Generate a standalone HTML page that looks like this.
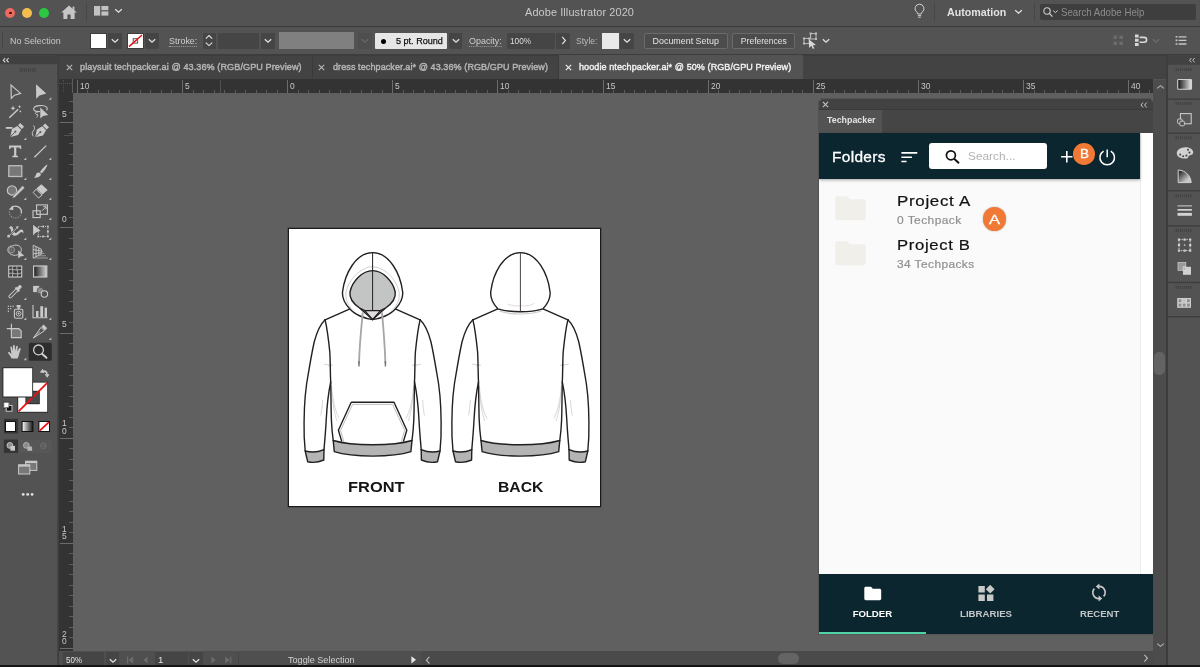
<!DOCTYPE html>
<html>
<head>
<meta charset="utf-8">
<title>Adobe Illustrator 2020</title>
<style>
*{margin:0;padding:0;box-sizing:border-box;}
html,body{width:1200px;height:667px;overflow:hidden;background:#535353;}
body{font-family:"Liberation Sans",sans-serif;font-size:10px;color:#d6d6d6;position:relative;}
.abs{position:absolute;}
#titlebar{left:0;top:0;width:1200px;height:26px;background:#535353;}
#titleline{left:0;top:26px;width:1200px;height:1px;background:#3a3a3a;}
#ctrlbar{left:0;top:27px;width:1200px;height:27px;background:#535353;}
#tabstrip{left:0;top:54px;width:1200px;height:25px;background:#434343;}
#canvas{left:73px;top:93px;width:1080px;height:558px;background:#606060;}
.t{position:absolute;white-space:nowrap;line-height:1;transform-origin:0 50%;}

.tl{position:absolute;top:7.7px;width:10.4px;height:10.4px;border-radius:50%;}
.vsep{position:absolute;width:1px;background:#474747;}

.cb{position:absolute;top:33px;height:15.5px;}
.dd{position:absolute;top:33px;height:15.5px;width:14px;background:#454545;border-radius:1px;}
.dd svg,.chev{position:absolute;left:3px;top:5px;}
.inp{position:absolute;top:33px;height:15.5px;background:#454545;border-radius:1px;}
.lbl{position:absolute;top:35.8px;font-size:9.6px;transform-origin:0 50%;color:#cfcfcf;white-space:nowrap;line-height:1;}
.dot{border-bottom:1px dotted #a0a0a0;padding-bottom:.4px;}
.btn{position:absolute;top:32.5px;height:16.5px;border:1px solid #6a6a6a;border-radius:2px;background:#4c4c4c;color:#e4e4e4;font-size:9.6px;line-height:14.5px;text-align:center;white-space:nowrap;}
.btn span{display:inline-block;}

.tab{position:absolute;top:62.2px;font-size:9.6px;color:#b4b4b4;white-space:nowrap;line-height:1;transform-origin:0 50%;-webkit-text-stroke:0.45px #b4b4b4;letter-spacing:0.1px;}
.tabx{position:absolute;top:63.5px;}
.rl{position:absolute;font-size:9.6px;color:#c8c8c8;line-height:1;white-space:nowrap;transform-origin:0 50%;transform:scaleX(.88);}

.pt{position:absolute;white-space:nowrap;line-height:1;transform-origin:0 50%;}
/*SECTION-CSS*/
</style>
</head>
<body>
<div id="root" style="position:absolute;left:0;top:0;width:1200px;height:667px;will-change:transform;">
<div id="titlebar" class="abs"></div>
<div id="titleline" class="abs"></div>
<div id="ctrlbar" class="abs"></div>
<div id="tabstrip" class="abs"></div>
<div id="canvas" class="abs"></div>
<!--TITLEBAR-->
<div class="tl" style="left:5.1px;background:#ec6a5e;"></div>
<div class="abs" style="left:8.9px;top:11.5px;width:2.8px;height:2.8px;border-radius:50%;background:#3a0d0a;"></div>
<div class="tl" style="left:21.6px;background:#f4be4f;"></div>
<div class="tl" style="left:38.5px;background:#2bc840;"></div>
<svg class="abs" style="left:60px;top:5px" width="18" height="15" viewBox="0 0 18 15"><path d="M9 0.6 L16.8 7.6 H14.6 V14 H10.6 V9.6 H7.4 V14 H3.4 V7.6 H1.2 Z" fill="#c6c6c6"/><rect x="12.6" y="1.6" width="1.8" height="3.4" fill="#c6c6c6"/></svg>
<div class="vsep" style="left:86px;top:3px;height:18px;"></div>
<svg class="abs" style="left:94px;top:6px" width="15" height="10" viewBox="0 0 15 10"><rect x="0" y="0" width="6.2" height="9.6" fill="#c2c2c2"/><rect x="7.4" y="0" width="7" height="4.2" fill="#c2c2c2"/><rect x="7.4" y="5.4" width="7" height="4.2" fill="#c2c2c2"/></svg>
<svg class="abs" style="left:114px;top:8px" width="9" height="6" viewBox="0 0 9 6"><path d="M1.2 1.2 L4.5 4.2 L7.8 1.2" stroke="#e6e6e6" stroke-width="1.2" fill="none"/></svg>
<div class="t" id="apptitle" style="transform:scaleX(0.927);left:525px;top:6.5px;font-size:11.8px;color:#c9c9c9;letter-spacing:0.1px;">Adobe Illustrator 2020</div>
<svg class="abs" style="left:913px;top:3px" width="13" height="18" viewBox="0 0 13 18"><path d="M6.5 1.2 a4.4 4.4 0 0 1 2.6 8 c-.6.5-.8 1-.8 1.8 h-3.6 c0-.8-.2-1.3-.8-1.8 a4.4 4.4 0 0 1 2.6-8z" stroke="#cfcfcf" stroke-width="1" fill="none"/><path d="M4.9 12.6h3.2M5.2 14.2h2.6" stroke="#cfcfcf" stroke-width="1"/></svg>
<div class="vsep" style="left:934px;top:3px;height:18px;"></div>
<div class="t" id="automation" style="transform:scaleX(0.970);left:946.5px;top:7px;font-size:11px;font-weight:bold;color:#e2e2e2;">Automation</div>
<svg class="abs" style="left:1014px;top:9px" width="9" height="6" viewBox="0 0 9 6"><path d="M1.2 1.2 L4.5 4.2 L7.8 1.2" stroke="#e6e6e6" stroke-width="1.2" fill="none"/></svg>
<div class="vsep" style="left:1034px;top:3px;height:18px;"></div>
<div class="abs" style="left:1040px;top:4px;width:156px;height:16px;background:#3e3e3e;border-radius:2px;"></div>
<svg class="abs" style="left:1042px;top:6px" width="18" height="13" viewBox="0 0 18 13"><circle cx="5" cy="5" r="3.2" stroke="#d0d0d0" stroke-width="1.1" fill="none"/><path d="M7.4 7.4 L10.4 10.6" stroke="#d0d0d0" stroke-width="1.3"/><path d="M11.2 4.6 L13.4 6.6 L15.6 4.6" stroke="#d0d0d0" stroke-width="1" fill="none"/></svg>
<div class="t" id="searchhelp" style="transform:scaleX(0.949);left:1061px;top:7.5px;font-size:10.2px;color:#8c8c8c;">Search Adobe Help</div>

<!--CTRLBAR-->
<div class="abs" style="left:2px;top:32px;width:1px;height:17px;background:#464646;"></div>
<div class="lbl" id="nosel" style="transform:scaleX(0.932);left:10px;color:#c8c8c8;">No Selection</div>
<div class="cb" style="left:90px;width:16.5px;background:#fff;border:1px solid #3c3c3c;"></div>
<div class="dd" style="left:107.5px;"><svg width="8" height="6" viewBox="0 0 8 6"><path d="M0.8 1.2 L4 4.2 L7.2 1.2" stroke="#e6e6e6" stroke-width="1.2" fill="none"/></svg></div>
<div class="cb" style="left:127px;width:16.5px;background:#fff;border:1px solid #3c3c3c;overflow:hidden;"><svg width="15" height="14" viewBox="0 0 15 14" style="position:absolute;left:0;top:0"><rect x="5.2" y="4.7" width="4.4" height="4.4" fill="none" stroke="#555" stroke-width="1"/><path d="M1 12.6 L14 1" stroke="#e8111b" stroke-width="1.5"/></svg></div>
<div class="dd" style="left:144.5px;"><svg width="8" height="6" viewBox="0 0 8 6"><path d="M0.8 1.2 L4 4.2 L7.2 1.2" stroke="#e6e6e6" stroke-width="1.2" fill="none"/></svg></div>
<div class="lbl" id="strokelbl" style="transform:scaleX(0.931);left:168.5px;"><span class="dot">Stroke:</span></div>
<div class="inp" style="left:202.5px;width:13.5px;"><svg width="8" height="13" viewBox="0 0 8 13" style="position:absolute;left:2.8px;top:1.2px"><path d="M0.8 4.6 L4 1.6 L7.2 4.6 M0.8 8.6 L4 11.6 L7.2 8.6" stroke="#e0e0e0" stroke-width="1.1" fill="none"/></svg></div>
<div class="inp" style="left:218px;width:41px;"></div>
<div class="dd" style="left:260.5px;"><svg width="8" height="6" viewBox="0 0 8 6"><path d="M0.8 1.2 L4 4.2 L7.2 1.2" stroke="#e6e6e6" stroke-width="1.2" fill="none"/></svg></div>
<div class="abs" style="left:279px;top:32px;width:75px;height:17px;background:#808080;"></div>
<div class="dd" style="left:358px;background:#4e4e4e;"><svg width="8" height="6" viewBox="0 0 8 6"><path d="M0.8 1.2 L4 4.2 L7.2 1.2" stroke="#6a6a6a" stroke-width="1.2" fill="none"/></svg></div>
<div class="cb" style="left:375px;width:72px;background:#e6e6e6;border-radius:1px;"></div>
<div class="abs" style="left:381px;top:38.5px;width:5px;height:5px;border-radius:50%;background:#000;"></div>
<div class="lbl" id="ptround" style="-webkit-text-stroke:.25px #111;transform:scaleX(0.945);left:395.5px;color:#111;">5 pt. Round</div>
<div class="dd" style="left:449px;width:13px;"><svg width="8" height="6" viewBox="0 0 8 6"><path d="M0.8 1.2 L4 4.2 L7.2 1.2" stroke="#e6e6e6" stroke-width="1.2" fill="none"/></svg></div>
<div class="lbl" id="opac" style="transform:scaleX(0.932);left:468.5px;"><span class="dot">Opacity:</span></div>
<div class="inp" style="left:506.5px;width:48px;"></div>
<div class="lbl" id="pct" style="transform:scaleX(0.864);left:510px;color:#dcdcdc;">100%</div>
<div class="inp" style="left:556px;width:14px;"><svg width="6" height="9" viewBox="0 0 6 9" style="position:absolute;left:4.5px;top:3.2px"><path d="M1.2 0.8 L4.4 4.5 L1.2 8.2" stroke="#e0e0e0" stroke-width="1.2" fill="none"/></svg></div>
<div class="lbl" id="stylelbl" style="transform:scaleX(0.896);left:575.5px;color:#b9b9b9;">Style:</div>
<div class="cb" style="left:602px;width:16.5px;background:#e9e9e9;"></div>
<div class="dd" style="left:620px;width:13.5px;"><svg width="8" height="6" viewBox="0 0 8 6"><path d="M0.8 1.2 L4 4.2 L7.2 1.2" stroke="#e6e6e6" stroke-width="1.2" fill="none"/></svg></div>
<div class="btn" id="docsetup" style="left:644px;width:84px;"><span id="docsetup_s" style="transform:scaleX(0.928);">Document Setup</span></div>
<div class="btn" id="prefs" style="left:732px;width:63px;"><span id="prefs_s" style="transform:scaleX(0.889);">Preferences</span></div>
<svg class="abs" style="left:802px;top:32px" width="18" height="18" viewBox="0 0 18 18"><rect x="2" y="6.4" width="5.2" height="5.2" fill="none" stroke="#bdbdbd" stroke-width="1"/><rect x="8.6" y="1.6" width="5.4" height="5.4" fill="none" stroke="#bdbdbd" stroke-width="1"/><path d="M1 5.4h2v2h-2zM6.2 5.4h2v2h-2zM1 10.6h2v2h-2zM7.6 .6h2v2h-2zM13 .6h2v2h-2zM13 6h2v2h-2z" fill="#bdbdbd"/><path d="M7 7.4 L7 16 L9.3 13.8 L10.9 17 L12.3 16.3 L10.8 13.2 L14 13 Z" fill="#d8d8d8"/></svg>
<svg class="abs" style="left:822px;top:38px" width="8" height="6" viewBox="0 0 8 6"><path d="M0.8 1.2 L4 4.2 L7.2 1.2" stroke="#e6e6e6" stroke-width="1.2" fill="none"/></svg>
<svg class="abs" style="left:1113px;top:35px" width="11" height="11" viewBox="0 0 11 11"><path d="M.5 .5h3.6v3.6h-3.6zM6.4 .5h3.6v3.6h-3.6zM.5 6.4h3.6v3.6h-3.6zM6.4 6.4h3.6v3.6h-3.6z" fill="#6b6b6b"/></svg>
<svg class="abs" style="left:1134px;top:34px" width="14" height="13" viewBox="0 0 14 13"><path d="M1 .6h3.6v3h-3.6zM1 4.8h3.6v3h-3.6zM1 9h3.6v3h-3.6z" fill="#d8d8d8"/><path d="M5.6 3.4h4.6a2.4 2.4 0 0 1 0 4.8H5.6" stroke="#d8d8d8" stroke-width="1.6" fill="none"/></svg>
<svg class="abs" style="left:1152px;top:38px" width="8" height="6" viewBox="0 0 8 6"><path d="M0.8 1.2 L4 4.2 L7.2 1.2" stroke="#6c6c6c" stroke-width="1.2" fill="none"/></svg>
<svg class="abs" style="left:1175px;top:35px" width="12" height="11" viewBox="0 0 12 11"><path d="M.6 1h1.8v1.6H.6zM.6 4.6h1.8v1.6H.6zM.6 8.2h1.8v1.6H.6z" fill="#c8c8c8"/><path d="M3.6 1.8h7.8M3.6 5.4h7.8M3.6 9h7.8" stroke="#c8c8c8" stroke-width="1.3"/></svg>

<!--TABS-->
<div class="abs" style="left:0;top:54px;width:1200px;height:1.5px;background:#3d3d3d;"></div>
<div class="abs" style="left:559px;top:55px;width:244px;height:24px;background:#535353;"></div>
<div class="abs" style="left:312px;top:57px;width:1px;height:21px;background:#3a3a3a;"></div>
<div class="abs" style="left:558px;top:57px;width:1px;height:21px;background:#3a3a3a;"></div>
<svg class="tabx" style="left:65.5px" width="7" height="7" viewBox="0 0 7 7"><path d="M0.8 0.8 L6.2 6.2 M6.2 0.8 L0.8 6.2" stroke="#b8b8b8" stroke-width="1.1"/></svg>
<div class="tab" id="tab1" style="transform:scaleX(0.946);left:80px;">playsuit techpacker.ai @ 43.36% (RGB/GPU Preview)</div>
<svg class="tabx" style="left:318.0px" width="7" height="7" viewBox="0 0 7 7"><path d="M0.8 0.8 L6.2 6.2 M6.2 0.8 L0.8 6.2" stroke="#b8b8b8" stroke-width="1.1"/></svg>
<div class="tab" id="tab2" style="transform:scaleX(0.940);left:332.7px;">dress techpacker.ai* @ 43.36% (RGB/GPU Preview)</div>
<svg class="tabx" style="left:564.5px" width="7" height="7" viewBox="0 0 7 7"><path d="M0.8 0.8 L6.2 6.2 M6.2 0.8 L0.8 6.2" stroke="#f2f2f2" stroke-width="1.1"/></svg>
<div class="tab" id="tab3" style="transform:scaleX(0.939);left:579.2px;color:#f2f2f2;-webkit-text-stroke:0.4px #f2f2f2;">hoodie ntechpacker.ai* @ 50% (RGB/GPU Preview)</div>

<!--RULERS-->
<div class="abs" style="left:57.3px;top:54px;width:1.4px;height:613px;background:#3e3e3e;"></div>
<div class="abs" id="rtop" style="left:58.7px;top:79px;width:1094.0px;height:14px;background:#333;overflow:hidden;">
<div class="abs" style="left:13.6px;top:0;width:1px;height:14px;background:#5c5c5c;"></div>
<div class="abs" style="left:4px;top:1px;width:0;height:12px;border-left:1px dotted #4e4e4e;"></div><div class="abs" style="left:0;top:4px;width:13px;height:0;border-top:1px dotted #565656;"></div>
<div class="abs" style="left:18.2px;top:1px;width:1px;height:13px;background:#6c6c6c;"></div>
<div class="rl" style="left:21.2px;top:1.9px;">10</div>
<div class="abs" style="left:28.7px;top:10.5px;width:1px;height:3.5px;background:#5c5c5c;"></div>
<div class="abs" style="left:39.2px;top:10.5px;width:1px;height:3.5px;background:#5c5c5c;"></div>
<div class="abs" style="left:49.7px;top:10.5px;width:1px;height:3.5px;background:#5c5c5c;"></div>
<div class="abs" style="left:60.3px;top:10.5px;width:1px;height:3.5px;background:#5c5c5c;"></div>
<div class="abs" style="left:70.8px;top:10.5px;width:1px;height:3.5px;background:#5c5c5c;"></div>
<div class="abs" style="left:81.3px;top:10.5px;width:1px;height:3.5px;background:#5c5c5c;"></div>
<div class="abs" style="left:91.8px;top:10.5px;width:1px;height:3.5px;background:#5c5c5c;"></div>
<div class="abs" style="left:102.3px;top:10.5px;width:1px;height:3.5px;background:#5c5c5c;"></div>
<div class="abs" style="left:112.8px;top:10.5px;width:1px;height:3.5px;background:#5c5c5c;"></div>
<div class="abs" style="left:123.3px;top:1px;width:1px;height:13px;background:#6c6c6c;"></div>
<div class="rl" style="left:126.3px;top:1.9px;">5</div>
<div class="abs" style="left:133.9px;top:10.5px;width:1px;height:3.5px;background:#5c5c5c;"></div>
<div class="abs" style="left:144.4px;top:10.5px;width:1px;height:3.5px;background:#5c5c5c;"></div>
<div class="abs" style="left:154.9px;top:10.5px;width:1px;height:3.5px;background:#5c5c5c;"></div>
<div class="abs" style="left:165.4px;top:10.5px;width:1px;height:3.5px;background:#5c5c5c;"></div>
<div class="abs" style="left:175.9px;top:10.5px;width:1px;height:3.5px;background:#5c5c5c;"></div>
<div class="abs" style="left:186.4px;top:10.5px;width:1px;height:3.5px;background:#5c5c5c;"></div>
<div class="abs" style="left:197.0px;top:10.5px;width:1px;height:3.5px;background:#5c5c5c;"></div>
<div class="abs" style="left:207.5px;top:10.5px;width:1px;height:3.5px;background:#5c5c5c;"></div>
<div class="abs" style="left:218.0px;top:10.5px;width:1px;height:3.5px;background:#5c5c5c;"></div>
<div class="abs" style="left:228.5px;top:1px;width:1px;height:13px;background:#6c6c6c;"></div>
<div class="rl" style="left:231.5px;top:1.9px;">0</div>
<div class="abs" style="left:239.0px;top:10.5px;width:1px;height:3.5px;background:#5c5c5c;"></div>
<div class="abs" style="left:249.5px;top:10.5px;width:1px;height:3.5px;background:#5c5c5c;"></div>
<div class="abs" style="left:260.0px;top:10.5px;width:1px;height:3.5px;background:#5c5c5c;"></div>
<div class="abs" style="left:270.6px;top:10.5px;width:1px;height:3.5px;background:#5c5c5c;"></div>
<div class="abs" style="left:281.1px;top:10.5px;width:1px;height:3.5px;background:#5c5c5c;"></div>
<div class="abs" style="left:291.6px;top:10.5px;width:1px;height:3.5px;background:#5c5c5c;"></div>
<div class="abs" style="left:302.1px;top:10.5px;width:1px;height:3.5px;background:#5c5c5c;"></div>
<div class="abs" style="left:312.6px;top:10.5px;width:1px;height:3.5px;background:#5c5c5c;"></div>
<div class="abs" style="left:323.1px;top:10.5px;width:1px;height:3.5px;background:#5c5c5c;"></div>
<div class="abs" style="left:333.7px;top:1px;width:1px;height:13px;background:#6c6c6c;"></div>
<div class="rl" style="left:336.7px;top:1.9px;">5</div>
<div class="abs" style="left:344.2px;top:10.5px;width:1px;height:3.5px;background:#5c5c5c;"></div>
<div class="abs" style="left:354.7px;top:10.5px;width:1px;height:3.5px;background:#5c5c5c;"></div>
<div class="abs" style="left:365.2px;top:10.5px;width:1px;height:3.5px;background:#5c5c5c;"></div>
<div class="abs" style="left:375.7px;top:10.5px;width:1px;height:3.5px;background:#5c5c5c;"></div>
<div class="abs" style="left:386.2px;top:10.5px;width:1px;height:3.5px;background:#5c5c5c;"></div>
<div class="abs" style="left:396.7px;top:10.5px;width:1px;height:3.5px;background:#5c5c5c;"></div>
<div class="abs" style="left:407.3px;top:10.5px;width:1px;height:3.5px;background:#5c5c5c;"></div>
<div class="abs" style="left:417.8px;top:10.5px;width:1px;height:3.5px;background:#5c5c5c;"></div>
<div class="abs" style="left:428.3px;top:10.5px;width:1px;height:3.5px;background:#5c5c5c;"></div>
<div class="abs" style="left:438.8px;top:1px;width:1px;height:13px;background:#6c6c6c;"></div>
<div class="rl" style="left:441.8px;top:1.9px;">10</div>
<div class="abs" style="left:449.3px;top:10.5px;width:1px;height:3.5px;background:#5c5c5c;"></div>
<div class="abs" style="left:459.8px;top:10.5px;width:1px;height:3.5px;background:#5c5c5c;"></div>
<div class="abs" style="left:470.3px;top:10.5px;width:1px;height:3.5px;background:#5c5c5c;"></div>
<div class="abs" style="left:480.9px;top:10.5px;width:1px;height:3.5px;background:#5c5c5c;"></div>
<div class="abs" style="left:491.4px;top:10.5px;width:1px;height:3.5px;background:#5c5c5c;"></div>
<div class="abs" style="left:501.9px;top:10.5px;width:1px;height:3.5px;background:#5c5c5c;"></div>
<div class="abs" style="left:512.4px;top:10.5px;width:1px;height:3.5px;background:#5c5c5c;"></div>
<div class="abs" style="left:522.9px;top:10.5px;width:1px;height:3.5px;background:#5c5c5c;"></div>
<div class="abs" style="left:533.4px;top:10.5px;width:1px;height:3.5px;background:#5c5c5c;"></div>
<div class="abs" style="left:544.0px;top:1px;width:1px;height:13px;background:#6c6c6c;"></div>
<div class="rl" style="left:547.0px;top:1.9px;">15</div>
<div class="abs" style="left:554.5px;top:10.5px;width:1px;height:3.5px;background:#5c5c5c;"></div>
<div class="abs" style="left:565.0px;top:10.5px;width:1px;height:3.5px;background:#5c5c5c;"></div>
<div class="abs" style="left:575.5px;top:10.5px;width:1px;height:3.5px;background:#5c5c5c;"></div>
<div class="abs" style="left:586.0px;top:10.5px;width:1px;height:3.5px;background:#5c5c5c;"></div>
<div class="abs" style="left:596.5px;top:10.5px;width:1px;height:3.5px;background:#5c5c5c;"></div>
<div class="abs" style="left:607.0px;top:10.5px;width:1px;height:3.5px;background:#5c5c5c;"></div>
<div class="abs" style="left:617.6px;top:10.5px;width:1px;height:3.5px;background:#5c5c5c;"></div>
<div class="abs" style="left:628.1px;top:10.5px;width:1px;height:3.5px;background:#5c5c5c;"></div>
<div class="abs" style="left:638.6px;top:10.5px;width:1px;height:3.5px;background:#5c5c5c;"></div>
<div class="abs" style="left:649.1px;top:1px;width:1px;height:13px;background:#6c6c6c;"></div>
<div class="rl" style="left:652.1px;top:1.9px;">20</div>
<div class="abs" style="left:659.6px;top:10.5px;width:1px;height:3.5px;background:#5c5c5c;"></div>
<div class="abs" style="left:670.1px;top:10.5px;width:1px;height:3.5px;background:#5c5c5c;"></div>
<div class="abs" style="left:680.6px;top:10.5px;width:1px;height:3.5px;background:#5c5c5c;"></div>
<div class="abs" style="left:691.2px;top:10.5px;width:1px;height:3.5px;background:#5c5c5c;"></div>
<div class="abs" style="left:701.7px;top:10.5px;width:1px;height:3.5px;background:#5c5c5c;"></div>
<div class="abs" style="left:712.2px;top:10.5px;width:1px;height:3.5px;background:#5c5c5c;"></div>
<div class="abs" style="left:722.7px;top:10.5px;width:1px;height:3.5px;background:#5c5c5c;"></div>
<div class="abs" style="left:733.2px;top:10.5px;width:1px;height:3.5px;background:#5c5c5c;"></div>
<div class="abs" style="left:743.7px;top:10.5px;width:1px;height:3.5px;background:#5c5c5c;"></div>
<div class="abs" style="left:754.2px;top:1px;width:1px;height:13px;background:#6c6c6c;"></div>
<div class="rl" style="left:757.2px;top:1.9px;">25</div>
<div class="abs" style="left:764.8px;top:10.5px;width:1px;height:3.5px;background:#5c5c5c;"></div>
<div class="abs" style="left:775.3px;top:10.5px;width:1px;height:3.5px;background:#5c5c5c;"></div>
<div class="abs" style="left:785.8px;top:10.5px;width:1px;height:3.5px;background:#5c5c5c;"></div>
<div class="abs" style="left:796.3px;top:10.5px;width:1px;height:3.5px;background:#5c5c5c;"></div>
<div class="abs" style="left:806.8px;top:10.5px;width:1px;height:3.5px;background:#5c5c5c;"></div>
<div class="abs" style="left:817.3px;top:10.5px;width:1px;height:3.5px;background:#5c5c5c;"></div>
<div class="abs" style="left:827.9px;top:10.5px;width:1px;height:3.5px;background:#5c5c5c;"></div>
<div class="abs" style="left:838.4px;top:10.5px;width:1px;height:3.5px;background:#5c5c5c;"></div>
<div class="abs" style="left:848.9px;top:10.5px;width:1px;height:3.5px;background:#5c5c5c;"></div>
<div class="abs" style="left:859.4px;top:1px;width:1px;height:13px;background:#6c6c6c;"></div>
<div class="rl" style="left:862.4px;top:1.9px;">30</div>
<div class="abs" style="left:869.9px;top:10.5px;width:1px;height:3.5px;background:#5c5c5c;"></div>
<div class="abs" style="left:880.4px;top:10.5px;width:1px;height:3.5px;background:#5c5c5c;"></div>
<div class="abs" style="left:890.9px;top:10.5px;width:1px;height:3.5px;background:#5c5c5c;"></div>
<div class="abs" style="left:901.5px;top:10.5px;width:1px;height:3.5px;background:#5c5c5c;"></div>
<div class="abs" style="left:912.0px;top:10.5px;width:1px;height:3.5px;background:#5c5c5c;"></div>
<div class="abs" style="left:922.5px;top:10.5px;width:1px;height:3.5px;background:#5c5c5c;"></div>
<div class="abs" style="left:933.0px;top:10.5px;width:1px;height:3.5px;background:#5c5c5c;"></div>
<div class="abs" style="left:943.5px;top:10.5px;width:1px;height:3.5px;background:#5c5c5c;"></div>
<div class="abs" style="left:954.0px;top:10.5px;width:1px;height:3.5px;background:#5c5c5c;"></div>
<div class="abs" style="left:964.5px;top:1px;width:1px;height:13px;background:#6c6c6c;"></div>
<div class="rl" style="left:967.5px;top:1.9px;">35</div>
<div class="abs" style="left:975.1px;top:10.5px;width:1px;height:3.5px;background:#5c5c5c;"></div>
<div class="abs" style="left:985.6px;top:10.5px;width:1px;height:3.5px;background:#5c5c5c;"></div>
<div class="abs" style="left:996.1px;top:10.5px;width:1px;height:3.5px;background:#5c5c5c;"></div>
<div class="abs" style="left:1006.6px;top:10.5px;width:1px;height:3.5px;background:#5c5c5c;"></div>
<div class="abs" style="left:1017.1px;top:10.5px;width:1px;height:3.5px;background:#5c5c5c;"></div>
<div class="abs" style="left:1027.6px;top:10.5px;width:1px;height:3.5px;background:#5c5c5c;"></div>
<div class="abs" style="left:1038.2px;top:10.5px;width:1px;height:3.5px;background:#5c5c5c;"></div>
<div class="abs" style="left:1048.7px;top:10.5px;width:1px;height:3.5px;background:#5c5c5c;"></div>
<div class="abs" style="left:1059.2px;top:10.5px;width:1px;height:3.5px;background:#5c5c5c;"></div>
<div class="abs" style="left:1069.7px;top:1px;width:1px;height:13px;background:#6c6c6c;"></div>
<div class="rl" style="left:1072.7px;top:1.9px;">40</div>
<div class="abs" style="left:1080.2px;top:10.5px;width:1px;height:3.5px;background:#5c5c5c;"></div>
<div class="abs" style="left:1090.7px;top:10.5px;width:1px;height:3.5px;background:#5c5c5c;"></div>
<div class="abs" style="left:161.8px;top:1px;width:1px;height:13px;background:#505050;"></div>
</div>
<div class="abs" id="rleft" style="left:58.7px;top:93px;width:14.1px;height:557.6px;background:#333;overflow:hidden;">
<div class="abs" style="left:10.4px;top:8.1px;width:3.7px;height:1px;background:#5c5c5c;"></div>
<div class="abs" style="left:10.4px;top:18.6px;width:3.7px;height:1px;background:#5c5c5c;"></div>
<div class="abs" style="left:1px;top:29.2px;width:13.1px;height:1px;background:#6c6c6c;"></div>
<div class="rl" style="left:3px;top:17.0px;line-height:7.6px;">5</div>
<div class="abs" style="left:10.4px;top:39.7px;width:3.7px;height:1px;background:#5c5c5c;"></div>
<div class="abs" style="left:10.4px;top:50.2px;width:3.7px;height:1px;background:#5c5c5c;"></div>
<div class="abs" style="left:10.4px;top:60.7px;width:3.7px;height:1px;background:#5c5c5c;"></div>
<div class="abs" style="left:10.4px;top:71.2px;width:3.7px;height:1px;background:#5c5c5c;"></div>
<div class="abs" style="left:10.4px;top:81.7px;width:3.7px;height:1px;background:#5c5c5c;"></div>
<div class="abs" style="left:10.4px;top:92.2px;width:3.7px;height:1px;background:#5c5c5c;"></div>
<div class="abs" style="left:10.4px;top:102.8px;width:3.7px;height:1px;background:#5c5c5c;"></div>
<div class="abs" style="left:10.4px;top:113.3px;width:3.7px;height:1px;background:#5c5c5c;"></div>
<div class="abs" style="left:10.4px;top:123.8px;width:3.7px;height:1px;background:#5c5c5c;"></div>
<div class="abs" style="left:1px;top:134.3px;width:13.1px;height:1px;background:#6c6c6c;"></div>
<div class="rl" style="left:3px;top:122.1px;line-height:7.6px;">0</div>
<div class="abs" style="left:10.4px;top:144.8px;width:3.7px;height:1px;background:#5c5c5c;"></div>
<div class="abs" style="left:10.4px;top:155.3px;width:3.7px;height:1px;background:#5c5c5c;"></div>
<div class="abs" style="left:10.4px;top:165.8px;width:3.7px;height:1px;background:#5c5c5c;"></div>
<div class="abs" style="left:10.4px;top:176.4px;width:3.7px;height:1px;background:#5c5c5c;"></div>
<div class="abs" style="left:10.4px;top:186.9px;width:3.7px;height:1px;background:#5c5c5c;"></div>
<div class="abs" style="left:10.4px;top:197.4px;width:3.7px;height:1px;background:#5c5c5c;"></div>
<div class="abs" style="left:10.4px;top:207.9px;width:3.7px;height:1px;background:#5c5c5c;"></div>
<div class="abs" style="left:10.4px;top:218.4px;width:3.7px;height:1px;background:#5c5c5c;"></div>
<div class="abs" style="left:10.4px;top:228.9px;width:3.7px;height:1px;background:#5c5c5c;"></div>
<div class="abs" style="left:1px;top:239.5px;width:13.1px;height:1px;background:#6c6c6c;"></div>
<div class="rl" style="left:3px;top:227.3px;line-height:7.6px;">5</div>
<div class="abs" style="left:10.4px;top:250.0px;width:3.7px;height:1px;background:#5c5c5c;"></div>
<div class="abs" style="left:10.4px;top:260.5px;width:3.7px;height:1px;background:#5c5c5c;"></div>
<div class="abs" style="left:10.4px;top:271.0px;width:3.7px;height:1px;background:#5c5c5c;"></div>
<div class="abs" style="left:10.4px;top:281.5px;width:3.7px;height:1px;background:#5c5c5c;"></div>
<div class="abs" style="left:10.4px;top:292.0px;width:3.7px;height:1px;background:#5c5c5c;"></div>
<div class="abs" style="left:10.4px;top:302.5px;width:3.7px;height:1px;background:#5c5c5c;"></div>
<div class="abs" style="left:10.4px;top:313.1px;width:3.7px;height:1px;background:#5c5c5c;"></div>
<div class="abs" style="left:10.4px;top:323.6px;width:3.7px;height:1px;background:#5c5c5c;"></div>
<div class="abs" style="left:10.4px;top:334.1px;width:3.7px;height:1px;background:#5c5c5c;"></div>
<div class="abs" style="left:1px;top:344.6px;width:13.1px;height:1px;background:#6c6c6c;"></div>
<div class="rl" style="left:3px;top:326.4px;line-height:7.6px;">1<br>0</div>
<div class="abs" style="left:10.4px;top:355.1px;width:3.7px;height:1px;background:#5c5c5c;"></div>
<div class="abs" style="left:10.4px;top:365.6px;width:3.7px;height:1px;background:#5c5c5c;"></div>
<div class="abs" style="left:10.4px;top:376.1px;width:3.7px;height:1px;background:#5c5c5c;"></div>
<div class="abs" style="left:10.4px;top:386.7px;width:3.7px;height:1px;background:#5c5c5c;"></div>
<div class="abs" style="left:10.4px;top:397.2px;width:3.7px;height:1px;background:#5c5c5c;"></div>
<div class="abs" style="left:10.4px;top:407.7px;width:3.7px;height:1px;background:#5c5c5c;"></div>
<div class="abs" style="left:10.4px;top:418.2px;width:3.7px;height:1px;background:#5c5c5c;"></div>
<div class="abs" style="left:10.4px;top:428.7px;width:3.7px;height:1px;background:#5c5c5c;"></div>
<div class="abs" style="left:10.4px;top:439.2px;width:3.7px;height:1px;background:#5c5c5c;"></div>
<div class="abs" style="left:1px;top:449.8px;width:13.1px;height:1px;background:#6c6c6c;"></div>
<div class="rl" style="left:3px;top:431.6px;line-height:7.6px;">1<br>5</div>
<div class="abs" style="left:10.4px;top:460.3px;width:3.7px;height:1px;background:#5c5c5c;"></div>
<div class="abs" style="left:10.4px;top:470.8px;width:3.7px;height:1px;background:#5c5c5c;"></div>
<div class="abs" style="left:10.4px;top:481.3px;width:3.7px;height:1px;background:#5c5c5c;"></div>
<div class="abs" style="left:10.4px;top:491.8px;width:3.7px;height:1px;background:#5c5c5c;"></div>
<div class="abs" style="left:10.4px;top:502.3px;width:3.7px;height:1px;background:#5c5c5c;"></div>
<div class="abs" style="left:10.4px;top:512.8px;width:3.7px;height:1px;background:#5c5c5c;"></div>
<div class="abs" style="left:10.4px;top:523.4px;width:3.7px;height:1px;background:#5c5c5c;"></div>
<div class="abs" style="left:10.4px;top:533.9px;width:3.7px;height:1px;background:#5c5c5c;"></div>
<div class="abs" style="left:10.4px;top:544.4px;width:3.7px;height:1px;background:#5c5c5c;"></div>
<div class="abs" style="left:1px;top:554.9px;width:13.1px;height:1px;background:#6c6c6c;"></div>
<div class="rl" style="left:3px;top:536.7px;line-height:7.6px;">2<br>0</div>
<div class="abs" style="left:5px;top:42.0px;width:9px;height:1px;background:#505050;"></div>
</div>
<!--TOOLBAR-->
<svg class="abs" style="left:0;top:54px" width="60" height="613" viewBox="0 54 60 613">
<rect x="0" y="54" width="57.3" height="613" fill="#535353"/>
<rect x="0" y="54" width="60" height="1.5" fill="#3c3c3c"/>
<rect x="0" y="55.5" width="57.3" height="8.8" fill="#404040"/>
<path d="M5.3 58 L3.3 60.2 L5.3 62.4 M8.6 58 L6.6 60.2 L8.6 62.4" stroke="#d8d8d8" stroke-width="1.1" fill="none"/>
<rect x="19.6" y="68.2" width="1.1" height="3.6" fill="#414141"/>
<rect x="21.7" y="68.2" width="1.1" height="3.6" fill="#414141"/>
<rect x="23.8" y="68.2" width="1.1" height="3.6" fill="#414141"/>
<rect x="25.9" y="68.2" width="1.1" height="3.6" fill="#414141"/>
<rect x="28.0" y="68.2" width="1.1" height="3.6" fill="#414141"/>
<rect x="30.1" y="68.2" width="1.1" height="3.6" fill="#414141"/>
<rect x="32.2" y="68.2" width="1.1" height="3.6" fill="#414141"/>
<rect x="34.3" y="68.2" width="1.1" height="3.6" fill="#414141"/>
<path d="M11 85 L11.3 98.4 L14.5 95.2 L20.6 93.4 Z" fill="none" stroke="#c9c9c9" stroke-width="1.15" stroke-linejoin="miter"/>
<path d="M36 84.3 L36.2 98.8 L39.5 95.6 L46.3 93.5 Z" fill="#c9c9c9"/>
<path d="M51.3 97.2 V99.8 H48.7 Z" fill="#bdbdbd"/>
<path d="M9.3 117.8 L18.2 109.2" stroke="#c9c9c9" stroke-width="1.5"/>
<path d="M13 105.6 L13.7 107.5 L15.6 108.2 L13.7 108.9 L13 110.8 L12.3 108.9 L10.4 108.2 L12.3 107.5 Z" fill="#c9c9c9"/>
<path d="M19.6 105 l.5 1.2 1.2.5 -1.2.5 -.5 1.2 -.5-1.2 -1.2-.5 1.2-.5z M20.3 110 l.4 1 1 .4 -1 .4 -.4 1 -.4-1 -1-.4 1-.4z" fill="#c9c9c9"/>
<path d="M40 111.5 C35 112 32.8 110 33.8 108 C35 105.3 44 104.6 46.6 107.2 C47.6 108.3 47.3 109.6 46.6 110.4" fill="none" stroke="#c9c9c9" stroke-width="1.1"/>
<path d="M37.6 112.2 a1.3 1.3 0 1 0 -.1 2.2 c.6 1.2 0 2.4 -1 3" fill="none" stroke="#c9c9c9" stroke-width="1"/>
<path d="M40.3 107.6 L40.3 118.6 L43 116 L48.2 115 Z" fill="#c9c9c9"/>
<rect x="5.8" y="127" width="6.7" height="1.8" fill="#c9c9c9"/>
<g transform="translate(16.3 130.8) rotate(45)"><rect x="-2.7" y="-8.3" width="5.4" height="3.2" fill="#c9c9c9"/><path d="M-2.7 -4.2 H2.7 L4.3 1.8 L0 8.6 L-4.3 1.8 Z" fill="#c9c9c9"/><path d="M0 8.6 V2" stroke="#535353" stroke-width="0.9"/><circle cx="0" cy="1.2" r="1" fill="#535353"/></g>
<path d="M26.3 137.5 V140.1 H23.7 Z" fill="#bdbdbd"/>
<g transform="translate(41.2 131.2) rotate(45)"><rect x="-2.7" y="-8.3" width="5.4" height="3.2" fill="#c9c9c9"/><path d="M-2.7 -4.2 H2.7 L4.3 1.8 L0 8.6 L-4.3 1.8 Z" fill="#c9c9c9"/><path d="M0 8.6 V2" stroke="#535353" stroke-width="0.9"/><circle cx="0" cy="1.2" r="1" fill="#535353"/></g>
<path d="M33.2 125.4 C35.4 127 34.6 129.4 33.2 131 C31.8 132.8 32 135 33.6 136.4" fill="none" stroke="#c9c9c9" stroke-width="1"/>
<path d="M9.1 145.6 H21.2 V149 H20 L19.6 147.5 H16.3 V155.6 L18 156 V157.2 H12.3 V156 L14.1 155.6 V147.5 H10.7 L10.3 149 H9.1 Z" fill="#c9c9c9"/>
<path d="M26.3 157.4 V160.0 H23.7 Z" fill="#bdbdbd"/>
<path d="M34.4 157.3 L46.2 145.6" stroke="#c9c9c9" stroke-width="1.3"/>
<path d="M51.3 157.4 V160.0 H48.7 Z" fill="#bdbdbd"/>
<rect x="8.8" y="165.7" width="13" height="10.8" fill="#787878" stroke="#bdbdbd" stroke-width="1.3"/>
<path d="M26.3 177.5 V180.1 H23.7 Z" fill="#bdbdbd"/>
<path d="M47.3 164.6 C46 164.8 41.5 169.6 40 172 L41.6 173.4 C43.8 171.6 47.6 166.4 47.3 164.6 Z" fill="#c9c9c9"/>
<path d="M39.3 172.6 L41 174.2 C40.6 176.6 37.4 178 33.6 177.6 C35.4 176.6 35.6 175.6 36 174.4 C36.5 173 37.8 172.2 39.3 172.6 Z" fill="#c9c9c9"/>
<path d="M51.3 177.5 V180.1 H48.7 Z" fill="#bdbdbd"/>
<circle cx="12" cy="190.4" r="4.7" fill="#787878" stroke="#c9c9c9" stroke-width="1.1"/>
<path d="M23.6 186.6 L24.6 188 L14.8 197.6 L12.6 198.2 L13 196 L22.4 185.8 Z" fill="#c9c9c9" stroke="#535353" stroke-width=".5"/>
<path d="M26.3 197.4 V200.0 H23.7 Z" fill="#bdbdbd"/>
<path d="M41.3 184.2 L47.7 190 L42.4 194.6 L36.4 188.6 Z" fill="#c9c9c9"/>
<path d="M36 189.2 L42 195.2 L38.6 198 L33.2 192.6 Z" fill="#535353" stroke="#c9c9c9" stroke-width="1"/>
<path d="M51.3 197.4 V200.0 H48.7 Z" fill="#bdbdbd"/>
<path d="M11.6 207.6 A6 6 0 0 1 21.4 213" fill="none" stroke="#c9c9c9" stroke-width="1.3"/>
<path d="M21.4 213 A6 6 0 1 1 9.5 211" fill="none" stroke="#9a9a9a" stroke-width="1.2" stroke-dasharray="1.1 1.3"/>
<path d="M8.7 209.6 L13 205.4 L13.4 209.9 Z" fill="#c9c9c9"/>
<path d="M26.3 217.4 V220.0 H23.7 Z" fill="#bdbdbd"/>
<rect x="36.6" y="204.9" width="10.8" height="9.4" fill="none" stroke="#c9c9c9" stroke-width="1.1"/>
<rect x="33" y="210.8" width="7.2" height="6.8" fill="none" stroke="#c9c9c9" stroke-width="1.1"/>
<path d="M42 210.8 L45.6 207.2 M43.4 206.7 H46.1 V209.4" fill="none" stroke="#c9c9c9" stroke-width="1"/>
<path d="M51.3 217.4 V220.0 H48.7 Z" fill="#bdbdbd"/>
<path d="M9.2 228.4 C9 226.4 11.6 225.4 12.6 227.2 C13.6 229 13.4 231.6 15 232.8 C17 234 18.6 230.2 21 229.6 C23 229.2 23.8 231.4 23.2 233.6 C22.6 232 21.4 231.6 20.4 232.4 C18.4 234.4 16.2 236.4 13.6 235.6 C11.4 234.8 11.2 232 11 230.4 C10.8 229.2 10.2 228.2 9.2 228.4 Z" fill="#c9c9c9"/><path d="M8.8 236 L17.4 227.4" stroke="#535353" stroke-width="2"/><path d="M8.8 236 L17.4 227.4" stroke="#c9c9c9" stroke-width=".9"/><circle cx="8.6" cy="236.2" r="1.35" fill="#c9c9c9"/><path d="M18.6 226 L17.9 229 L15.7 226.8 Z" fill="#c9c9c9"/>
<path d="M26.3 237.5 V240.1 H23.7 Z" fill="#bdbdbd"/>
<path d="M33.1 224.8 L33.1 235.2 L36 232.6 L40.6 230.8 Z" fill="#c9c9c9"/>
<rect x="38.3" y="226.5" width="9.6" height="10" fill="none" stroke="#c9c9c9" stroke-width="1" stroke-dasharray="1.2 1"/>
<rect x="37.4" y="235.6" width="1.8" height="1.8" fill="#c9c9c9"/>
<rect x="42.2" y="235.6" width="1.8" height="1.8" fill="#c9c9c9"/>
<rect x="47.0" y="235.6" width="1.8" height="1.8" fill="#c9c9c9"/>
<rect x="47.0" y="230.6" width="1.8" height="1.8" fill="#c9c9c9"/>
<rect x="47.0" y="225.6" width="1.8" height="1.8" fill="#c9c9c9"/>
<rect x="42.2" y="225.6" width="1.8" height="1.8" fill="#c9c9c9"/>
<path d="M51.3 237.5 V240.1 H48.7 Z" fill="#bdbdbd"/>
<path d="M7.8 249.8 C7.8 247 10.4 245.6 12.8 246 C14.6 244.6 18 244.8 19.8 246.4 C21.6 248 21.8 250.6 20.6 252.4 C19.4 254.6 16 255.8 13.4 255.2 C10.2 254.6 7.8 252.6 7.8 249.8 Z" fill="none" stroke="#c9c9c9" stroke-width="1"/><circle cx="11.7" cy="249.9" r="2.9" fill="none" stroke="#aaa" stroke-width=".8"/><path d="M8.4 249.9 H15 M11.7 246.6 V253.2" stroke="#8c8c8c" stroke-width=".6"/>
<path d="M18.2 250.2 L18.2 258.4 L20.4 256.4 L24.2 255.8 Z" fill="#c9c9c9"/>
<path d="M26.3 257.4 V260.0 H23.7 Z" fill="#bdbdbd"/>
<path d="M33.2 245.2 L41.4 249.2 V254.2 L33.2 258 Z M33.2 249.6 L41.4 251 M33.2 253.8 L41.4 252.6 M36 246.6 V256.8 M38.8 248 V255.4" fill="none" stroke="#c9c9c9" stroke-width=".95"/>
<path d="M33.2 258 H48 M36.6 255.8 H46 M39.6 253.6 H44.4 M42 251.6 H43" stroke="#a6a6a6" stroke-width=".9"/>
<path d="M51.3 257.4 V260.0 H48.7 Z" fill="#bdbdbd"/>
<defs><linearGradient id="gg" x1="0" x2="1" y1="0" y2="0"><stop offset="0" stop-color="#1a1a1a"/><stop offset="1" stop-color="#d4d4d4"/></linearGradient></defs>
<rect x="8.7" y="266" width="13" height="11" fill="#3e3e3e" stroke="#c9c9c9" stroke-width="1.1"/>
<path d="M8.7 270 C12 268 14 271 21.7 269.4 M8.7 273.6 C12 272 15 275.6 21.7 272.8 M12.8 266 C11.6 269 14 273 12.2 277 M17 266 C16 270 19 273 17.4 277" fill="none" stroke="#bdbdbd" stroke-width=".9"/>
<rect x="33.6" y="266" width="13.2" height="11" fill="url(#gg)" stroke="#c9c9c9" stroke-width="1.2"/>
<g transform="translate(9.3 297.5) rotate(-45)"><rect x="0" y="-1.35" width="12.4" height="2.7" rx="1.35" fill="#535353" stroke="#c9c9c9" stroke-width="1"/><rect x="10.4" y="-2.7" width="2" height="5.4" rx=".4" fill="#c9c9c9"/><rect x="11.6" y="-1.7" width="5.2" height="3.4" rx="1.6" fill="#c9c9c9"/></g>
<path d="M26.3 297.5 V300.1 H23.7 Z" fill="#bdbdbd"/>
<rect x="33.1" y="285.9" width="6.2" height="6.2" fill="#c9c9c9"/>
<circle cx="40.4" cy="290.7" r="3.3" fill="#8c8c8c" stroke="#535353" stroke-width=".8"/>
<circle cx="44.4" cy="294" r="3.2" fill="#535353" stroke="#c9c9c9" stroke-width="1.1"/>
<rect x="14.4" y="309.2" width="8.4" height="9" rx="1.2" fill="none" stroke="#c9c9c9" stroke-width="1.1"/>
<rect x="16.6" y="305" width="4" height="2.3" fill="#c9c9c9"/><rect x="17.6" y="307" width="2" height="2" fill="#c9c9c9"/>
<circle cx="18.6" cy="313.6" r="2.4" fill="none" stroke="#c9c9c9" stroke-width=".9"/><circle cx="18.6" cy="313.6" r="1" fill="#c9c9c9"/>
<rect x="7.800000000000001" y="305.7" width="1.2" height="1.2" fill="#c9c9c9"/>
<rect x="10.200000000000001" y="305.7" width="1.2" height="1.2" fill="#c9c9c9"/>
<rect x="12.6" y="305.7" width="1.2" height="1.2" fill="#c9c9c9"/>
<rect x="7.800000000000001" y="308.09999999999997" width="1.2" height="1.2" fill="#c9c9c9"/>
<rect x="10.200000000000001" y="308.09999999999997" width="1.2" height="1.2" fill="#c9c9c9"/>
<rect x="7.800000000000001" y="310.7" width="1.2" height="1.2" fill="#c9c9c9"/>
<path d="M26.3 317.5 V320.1 H23.7 Z" fill="#bdbdbd"/>
<path d="M33 305 V317.7 H47.6" fill="none" stroke="#c9c9c9" stroke-width="1.1"/>
<rect x="36" y="311" width="2.5" height="6.2" fill="#c9c9c9"/><rect x="40.3" y="306.2" width="2.8" height="11" fill="#c9c9c9"/><rect x="44.6" y="307.6" width="2.4" height="9.6" fill="#c9c9c9"/>
<path d="M51.3 317.5 V320.1 H48.7 Z" fill="#bdbdbd"/>
<path d="M11.4 328.6 H18.8 L21.2 331 V337.6 H11.4 Z" fill="#787878" stroke="#c9c9c9" stroke-width="1.1"/>
<path d="M11.4 323.8 V331 M6.8 328.6 H13" stroke="#c9c9c9" stroke-width="1.1"/>
<path d="M43.6 324.6 L47.2 328.2 L45 330.4 L41.4 326.8 Z" fill="#c9c9c9"/>
<path d="M41 327.4 L44.4 330.8 L33.4 338 Z" fill="none" stroke="#c9c9c9" stroke-width="1"/><path d="M33.4 338 L40 331.6" stroke="#c9c9c9" stroke-width=".8"/>
<path d="M51.3 337.5 V340.1 H48.7 Z" fill="#bdbdbd"/>
<path d="M11.6 358.4 C10.4 356 9.2 354.6 8.2 353.2 C7.6 352.2 8.8 351.4 9.8 352.4 L11.4 354 L10.4 347.4 C10.2 346.2 11.8 346 12 347.2 L12.8 351 L13 345.8 C13 344.6 14.8 344.6 14.8 345.8 L15 351 L16.2 346.4 C16.4 345.2 18 345.6 17.8 346.8 L17.2 351.6 L19.2 348.4 C19.8 347.4 21.2 348.2 20.6 349.4 C19.4 352 19.2 355.4 17.6 358.4 Z" fill="#c9c9c9"/>
<path d="M26.3 357.6 V360.2 H23.7 Z" fill="#bdbdbd"/>
<rect x="28.8" y="342.8" width="23" height="18" rx="1.6" fill="#2d2d2d"/>
<circle cx="38.5" cy="349.9" r="4.9" fill="none" stroke="#d0d0d0" stroke-width="1.3"/><path d="M42.2 353.9 L46.5 357.8" stroke="#d0d0d0" stroke-width="2" stroke-linecap="round"/>
<rect x="17.3" y="381.7" width="30.8" height="31" fill="#2a2a2a"/>
<rect x="18.2" y="382.6" width="29" height="29.2" fill="#fff"/>
<rect x="25.4" y="390.8" width="14.4" height="13.4" fill="#2a2a2a"/><rect x="26.3" y="391.7" width="12.6" height="11.6" fill="#4a4a4a"/>
<path d="M18.6 411.4 L47 383.2" stroke="#f10c12" stroke-width="1.7"/>
<rect x="2.4" y="367.3" width="30.7" height="30.2" fill="#2a2a2a"/><rect x="3.4" y="368.2" width="28.8" height="28.3" fill="#fff"/>
<path d="M42.4 372 C44 370 47 371.4 47 374.4" fill="none" stroke="#c9c9c9" stroke-width="1.7"/><path d="M39.8 372.4 L42.6 368.8 L44.6 373 Z M44.6 374.2 H49.6 L47.2 377.8 Z" fill="#c9c9c9"/>
<rect x="3.2" y="401.8" width="6.6" height="6.6" fill="#fff" stroke="#2a2a2a" stroke-width=".8"/><rect x="6.2" y="405.4" width="5.8" height="5.8" fill="#111" stroke="#d8d8d8" stroke-width=".9"/><rect x="3.9" y="402.6" width="5" height="5" fill="#fff" stroke="#444" stroke-width=".6"/>
<rect x="3.9" y="418.8" width="14.2" height="14.6" fill="#343434"/>
<rect x="5" y="421" width="11" height="11" fill="#111"/><rect x="6" y="422" width="9" height="9" fill="#fff"/>
<defs><linearGradient id="g2" x1="0" x2="1"><stop offset="0" stop-color="#f4f4f4"/><stop offset="1" stop-color="#222"/></linearGradient><clipPath id="c3"><rect x="39.4" y="422" width="9.6" height="9"/></clipPath></defs>
<rect x="21.6" y="421" width="11.8" height="11" fill="#111"/><rect x="22.6" y="422" width="9.8" height="9" fill="url(#g2)"/>
<rect x="38.4" y="421" width="11.6" height="11" fill="#111"/><rect x="39.4" y="422" width="9.6" height="9" fill="#fff"/><path d="M39.4 431 L49 422" stroke="#f10c12" stroke-width="1.7" clip-path="url(#c3)"/>
<rect x="3.9" y="439.5" width="14.2" height="13.4" fill="#343434"/><rect x="18.6" y="439.5" width="33" height="13.6" fill="#575757"/>
<circle cx="9.9" cy="445.4" r="2.9" fill="#8a8a8a" stroke="#c9c9c9" stroke-width=".9"/><rect x="10.4" y="445.9" width="4.6" height="4.8" fill="#c9c9c9"/>
<circle cx="26.3" cy="445.4" r="2.9" fill="#8a8a8a" stroke="#b4b4b4" stroke-width=".9"/><rect x="27.4" y="446.5" width="4.7" height="4.3" fill="#b4b4b4"/>
<circle cx="43.4" cy="445.8" r="2.9" fill="#5e5e5e" stroke="#6e6e6e" stroke-width=".9"/><path d="M43.4 445.8 h2" stroke="#757575" stroke-width=".8"/>
<rect x="25.6" y="461.2" width="11.2" height="9.2" fill="#787878" stroke="#c9c9c9" stroke-width="1"/><rect x="25.6" y="461.2" width="11.2" height="1.8" fill="#c9c9c9"/>
<rect x="18.6" y="464.8" width="11.2" height="9.2" fill="#787878" stroke="#c9c9c9" stroke-width="1"/><rect x="18.6" y="464.8" width="11.2" height="1.8" fill="#c9c9c9"/>
<circle cx="23.2" cy="494.4" r="1.45" fill="#dcdcdc"/>
<circle cx="27.7" cy="494.4" r="1.45" fill="#dcdcdc"/>
<circle cx="32.1" cy="494.4" r="1.45" fill="#dcdcdc"/>
</svg>
<!--ARTBOARD-->
<div class="abs" style="left:287.5px;top:227.5px;width:313px;height:279px;background:#fff;border:1px solid #1b1b1b;box-shadow:0 0 0 .5px #3a3a3a;"></div>
<svg class="abs" style="left:288px;top:228px" width="312" height="278" viewBox="288 228 312 278">
<g transform="translate(372.6 0)">
<g fill="none" stroke="#d2d2d2" stroke-width=".9">
<g transform="scale(-1 1)">
<path d="M-48.5 364.2 L-39.5 365.4 M-44.5 366.2 L-41 364.4"/>
<path d="M-41 386 C-40 400 -37.5 411 -33.4 418.5 M-40.6 394 C-39.6 406 -38 414 -35.6 421"/>
<path d="M-50 400 C-50.4 406 -51 411 -51.8 415.5"/>
</g>
<g transform="scale(1 1)">
<path d="M-48.5 364.2 L-39.5 365.4 M-44.5 366.2 L-41 364.4"/>
<path d="M-41 386 C-40 400 -37.5 411 -33.4 418.5 M-40.6 394 C-39.6 406 -38 414 -35.6 421"/>
<path d="M-50 400 C-50.4 406 -51 411 -51.8 415.5"/>
</g>
</g>
<g transform="scale(-1 1)">
<path d="M-67.4 451 C-61 452.8 -54.5 452.2 -48.6 449.6 L-48.8 460 C-54 462.4 -60 462.9 -64.9 461.8 Z" fill="#b4b4b4" stroke="#231f20" stroke-width="1.4" stroke-linejoin="round"/>
</g>
<g transform="scale(1 1)">
<path d="M-67.4 451 C-61 452.8 -54.5 452.2 -48.6 449.6 L-48.8 460 C-54 462.4 -60 462.9 -64.9 461.8 Z" fill="#b4b4b4" stroke="#231f20" stroke-width="1.4" stroke-linejoin="round"/>
</g>
<path d="M-39.4 440.5 C-20 446.2 20 446.2 39.4 440.5 L38.3 451.7 C20 457.6 -20 457.6 -38.3 451.7 Z" fill="#b4b4b4" stroke="#231f20" stroke-width="1.4" stroke-linejoin="round"/>
<g fill="none" stroke="#231f20" stroke-width="1.4" stroke-linecap="round" stroke-linejoin="round">
<g transform="scale(-1 1)">
<path d="M-22.6 308.8 L-47.5 319.8"/>
<path d="M-47.5 319.8 C-52 324 -56 333 -58.4 342 C-61.5 356 -64 372 -66 384 C-68 398 -68.8 420 -68.4 437 L-67.4 451"/>
<path d="M-47.5 319.8 C-45.5 328 -44 340 -42.8 352 C-42.2 362 -42.4 372 -41.9 382 C-44 392 -45.6 405 -46.4 420 C-47 432 -48 442 -48.6 449.6"/>
<path d="M-41.9 382 C-41.6 395 -41.6 410 -41.2 420 C-40.8 430 -40 436 -39.4 440.5"/>
</g>
<g transform="scale(1 1)">
<path d="M-22.6 308.8 L-47.5 319.8"/>
<path d="M-47.5 319.8 C-52 324 -56 333 -58.4 342 C-61.5 356 -64 372 -66 384 C-68 398 -68.8 420 -68.4 437 L-67.4 451"/>
<path d="M-47.5 319.8 C-45.5 328 -44 340 -42.8 352 C-42.2 362 -42.4 372 -41.9 382 C-44 392 -45.6 405 -46.4 420 C-47 432 -48 442 -48.6 449.6"/>
<path d="M-41.9 382 C-41.6 395 -41.6 410 -41.2 420 C-40.8 430 -40 436 -39.4 440.5"/>
</g>
</g>
<path d="M-22.9 308.8 C-27.8 303.6 -30.8 298 -30 291.5 C-27.8 274 -17 252.6 0 252.6 C17 252.6 27.8 274 30 291.5 C30.8 298 27.8 303.6 22.9 308.8 C18 314.6 8 318.6 0 319.6 C-8 318.6 -18 314.6 -22.9 308.8 Z" fill="#fff" stroke="#231f20" stroke-width="1.4" stroke-linejoin="round"/>
<path d="M-19 311 C-25.6 304.4 -27.6 298 -26.4 291.6 C-24 280 -12 266.8 0 266.8 C12 266.8 24 280 26.4 291.6 C27.6 298 25.6 304.4 19 311" fill="none" stroke="#c4c4c4" stroke-width=".8"/>
<path d="M0 270.6 C-10 270.6 -20.4 281 -22.6 292 C-23.4 297.6 -19.6 303.4 -13 308 L-7.8 310.7 H7.8 L13 308 C19.6 303.4 23.4 297.6 22.6 292 C20.4 281 10 270.6 0 270.6 Z" fill="#c3c5c5" stroke="#231f20" stroke-width="1.4" stroke-linejoin="round"/>
<path d="M-7.8 310.9 H7.8" stroke="#5a5052" stroke-width="1.6"/>
<path d="M-7.8 310.7 L0 319.6 L7.8 310.7 Z" fill="#dedede" stroke="#231f20" stroke-width="1.2" stroke-linejoin="round"/>
<path d="M-13 308 L0 319.6 L13 308" fill="none" stroke="#231f20" stroke-width="1.3"/>
<path d="M0 252.6 V310.4" stroke="#231f20" stroke-width="1"/>
<path d="M-9.8 312.4 C-11.6 330 -13.2 348 -13.6 364" fill="none" stroke="#a6a6a6" stroke-width="1.8"/>
<path d="M9.4 312.4 C11 330 12.4 348 12.8 364" fill="none" stroke="#a6a6a6" stroke-width="1.8"/>
<path d="M-13.6 361 V366.4 M12.8 361 V366.4" stroke="#777" stroke-width="1.4"/>
<path d="M-21.4 402.3 H21.4 L34.2 430.2 L30.8 441.6 M-21.4 402.3 L-34.2 430.2 L-30.8 441.6" fill="none" stroke="#231f20" stroke-width="1.4" stroke-linejoin="round"/>
<path d="M-20 404.4 H20 L32 430.4 L28.8 441.8 M-20 404.4 L-32 430.4 L-28.8 441.8" fill="none" stroke="#a0a0a0" stroke-width=".7" stroke-linejoin="round"/>
</g>
<g transform="translate(520.4 0)">
<g fill="none" stroke="#d2d2d2" stroke-width=".9">
<g transform="scale(-1 1)">
<path d="M-48.5 364.2 L-39.5 365.4 M-44.5 366.2 L-41 364.4"/>
<path d="M-41 386 C-40 400 -37.5 411 -33.4 418.5 M-40.6 394 C-39.6 406 -38 414 -35.6 421"/>
<path d="M-50 400 C-50.4 406 -51 411 -51.8 415.5"/>
</g>
<g transform="scale(1 1)">
<path d="M-48.5 364.2 L-39.5 365.4 M-44.5 366.2 L-41 364.4"/>
<path d="M-41 386 C-40 400 -37.5 411 -33.4 418.5 M-40.6 394 C-39.6 406 -38 414 -35.6 421"/>
<path d="M-50 400 C-50.4 406 -51 411 -51.8 415.5"/>
</g>
</g>
<g transform="scale(-1 1)">
<path d="M-67.4 451 C-61 452.8 -54.5 452.2 -48.6 449.6 L-48.8 460 C-54 462.4 -60 462.9 -64.9 461.8 Z" fill="#b4b4b4" stroke="#231f20" stroke-width="1.4" stroke-linejoin="round"/>
</g>
<g transform="scale(1 1)">
<path d="M-67.4 451 C-61 452.8 -54.5 452.2 -48.6 449.6 L-48.8 460 C-54 462.4 -60 462.9 -64.9 461.8 Z" fill="#b4b4b4" stroke="#231f20" stroke-width="1.4" stroke-linejoin="round"/>
</g>
<path d="M-39.4 440.5 C-20 446.2 20 446.2 39.4 440.5 L38.3 451.7 C20 457.6 -20 457.6 -38.3 451.7 Z" fill="#b4b4b4" stroke="#231f20" stroke-width="1.4" stroke-linejoin="round"/>
<g fill="none" stroke="#231f20" stroke-width="1.4" stroke-linecap="round" stroke-linejoin="round">
<g transform="scale(-1 1)">
<path d="M-22.6 308.8 L-47.5 319.8"/>
<path d="M-47.5 319.8 C-52 324 -56 333 -58.4 342 C-61.5 356 -64 372 -66 384 C-68 398 -68.8 420 -68.4 437 L-67.4 451"/>
<path d="M-47.5 319.8 C-45.5 328 -44 340 -42.8 352 C-42.2 362 -42.4 372 -41.9 382 C-44 392 -45.6 405 -46.4 420 C-47 432 -48 442 -48.6 449.6"/>
<path d="M-41.9 382 C-41.6 395 -41.6 410 -41.2 420 C-40.8 430 -40 436 -39.4 440.5"/>
</g>
<g transform="scale(1 1)">
<path d="M-22.6 308.8 L-47.5 319.8"/>
<path d="M-47.5 319.8 C-52 324 -56 333 -58.4 342 C-61.5 356 -64 372 -66 384 C-68 398 -68.8 420 -68.4 437 L-67.4 451"/>
<path d="M-47.5 319.8 C-45.5 328 -44 340 -42.8 352 C-42.2 362 -42.4 372 -41.9 382 C-44 392 -45.6 405 -46.4 420 C-47 432 -48 442 -48.6 449.6"/>
<path d="M-41.9 382 C-41.6 395 -41.6 410 -41.2 420 C-40.8 430 -40 436 -39.4 440.5"/>
</g>
</g>
<path d="M-22.6 308.8 C-27.6 303.6 -30.4 298 -29.6 291.5 C-27.4 274 -17 252.6 0 252.6 C17 252.6 27.4 274 29.6 291.5 C30.4 298 27.6 303.6 22.6 308.8 C10 312.8 -10 312.8 -22.6 308.8 Z" fill="#fff" stroke="#231f20" stroke-width="1.4" stroke-linejoin="round"/>
<path d="M-21 311 C-9 315 9 315 21 311" fill="none" stroke="#cacaca" stroke-width="1.2"/>
<path d="M-13 304 C-8 306 -4 306.4 0 305.6 C5 306.6 10 305.6 14 303.4" fill="none" stroke="#d6d6d6" stroke-width=".8"/>
<path d="M0 252.6 V311.6" stroke="#4a4446" stroke-width="1"/>
</g>
<text id="frontlbl" x="376.3" y="491.6" text-anchor="middle" font-family="Liberation Sans, sans-serif" font-weight="bold" font-size="15.2" fill="#141414" textLength="56.6" lengthAdjust="spacingAndGlyphs">FRONT</text>
<text id="backlbl" x="520.7" y="491.6" text-anchor="middle" font-family="Liberation Sans, sans-serif" font-weight="bold" font-size="15.2" fill="#141414" textLength="45.4" lengthAdjust="spacingAndGlyphs">BACK</text>
</svg>
<!--PANEL-->
<div class="abs" style="left:818.5px;top:98.5px;width:334px;height:535.5px;background:#fafafa;border-radius:2.5px 2.5px 0 0;overflow:hidden;box-shadow:0 0 0 .6px #4a4a4a;">
  <div class="abs" style="left:0;top:0;width:334px;height:11.5px;background:#424242;border-bottom:1px solid #3a3a3a;"></div>
  <div class="abs" style="left:0;top:11.5px;width:334px;height:22.5px;background:#454545;"></div>
  <div class="abs" style="left:0;top:11.5px;width:63.5px;height:22.5px;background:#535353;"></div>
  <svg class="abs" style="left:3.2px;top:2.4px" width="7" height="7" viewBox="0 0 7 7"><path d="M0.9 0.9 L6.1 6.1 M6.1 0.9 L0.9 6.1" stroke="#c4c4c4" stroke-width="1.1"/></svg>
  <svg class="abs" style="left:321px;top:3.4px" width="8" height="6" viewBox="0 0 8 6"><path d="M3 .6 L1 3 L3 5.4 M6.6 .6 L4.6 3 L6.6 5.4" stroke="#c8c8c8" stroke-width="1" fill="none"/></svg>
  <div class="abs" style="left:0;top:34px;width:321.5px;height:546px;background:#fafafa;"></div>
  <div class="abs" style="left:321.5px;top:34px;width:12.5px;height:442px;background:#fff;border-left:1px solid #ececec;"></div>
  <div class="abs" style="left:0;top:34px;width:321.5px;height:46.8px;background:#0c262f;box-shadow:0 1px 3px rgba(0,0,0,.35);"></div>
  <div class="abs" style="left:110.3px;top:44.5px;width:118px;height:26.3px;background:#fff;border-radius:3px;"></div>
  <svg class="abs" style="left:82px;top:52px" width="18" height="12" viewBox="0 0 18 12"><path d="M.4 1.9 H16.3 M.4 6.2 H10.9 M.4 10.5 H5.5" stroke="#fff" stroke-width="1.6"/></svg>
  <svg class="abs" style="left:125px;top:50px" width="18" height="17" viewBox="0 0 18 17"><circle cx="6.9" cy="6.3" r="4.5" stroke="#111" stroke-width="1.7" fill="none"/><path d="M10.2 9.8 L15 14.2" stroke="#111" stroke-width="1.9"/></svg>
  <svg class="abs" style="left:241px;top:51px" width="14" height="14" viewBox="0 0 14 14"><path d="M6.8 1.1 V12.5 M1.1 6.8 H12.5" stroke="#fff" stroke-width="1.6"/></svg>
  <div class="abs" style="left:254.9px;top:44.9px;width:21.6px;height:21.6px;border-radius:50%;background:#f07a35;box-shadow:0 0 2px rgba(0,0,0,.3);"></div>
  <svg class="abs" style="left:279px;top:48px" width="20" height="20" viewBox="0 0 20 20"><path d="M5.6 4.2 A7.3 7.3 0 1 0 12.8 4.2" stroke="#fff" stroke-width="1.5" fill="none"/><path d="M9.2 2.4 V10.2" stroke="#fff" stroke-width="1.5"/></svg>
  <div class="abs" style="left:164.1px;top:108.9px;width:23.4px;height:23.4px;border-radius:50%;background:#f07a35;box-shadow:0 0 2px rgba(0,0,0,.3);"></div>
  <svg class="abs" style="left:16.5px;top:97.5px" width="32" height="25" viewBox="0 0 32 25"><path d="M2 0.3 H11 C12 .3 12.6 .8 13.2 1.6 L14.6 3.3 H28.6 C29.8 3.3 30.8 4.3 30.8 5.5 V22 C30.8 23.2 29.8 24.2 28.6 24.2 H2.4 C1.2 24.2 .3 23.2 .3 22 V2.2 C.3 1 1 .3 2 .3 Z" fill="#f1efea"/></svg>
  <svg class="abs" style="left:16.5px;top:142px" width="32" height="25" viewBox="0 0 32 25"><path d="M2 0.3 H11 C12 .3 12.6 .8 13.2 1.6 L14.6 3.3 H28.6 C29.8 3.3 30.8 4.3 30.8 5.5 V22 C30.8 23.2 29.8 24.2 28.6 24.2 H2.4 C1.2 24.2 .3 23.2 .3 22 V2.2 C.3 1 1 .3 2 .3 Z" fill="#f1efea"/></svg>
  <div class="abs" style="left:0;top:475.5px;width:334px;height:60px;background:#0c262f;"></div>
  <div class="abs" style="left:0;top:533.2px;width:107.8px;height:2.3px;background:#52d3a6;"></div>
  <svg class="abs" style="left:45px;top:487px" width="18" height="15" viewBox="0 0 18 15"><path d="M1.8 .7 H6.4 C7 .7 7.4 1 7.8 1.5 L8.8 2.8 H15.6 C16.5 2.8 17.2 3.5 17.2 4.4 V12.6 C17.2 13.5 16.5 14.2 15.6 14.2 H1.9 C1 14.2 .3 13.5 .3 12.6 V2.2 C.3 1.3 1 .7 1.8 .7 Z" fill="#fff"/></svg>
  <svg class="abs" style="left:159px;top:486px" width="17" height="17" viewBox="0 0 17 17"><path d="M.4 1 H6.8 V7.4 H.4 Z M.4 9.6 H6.8 V16 H.4 Z M9 9.6 H15.4 V16 H9 Z" fill="#c9c9c9"/><path d="M12.2 -.2 L16.6 4.2 L12.2 8.6 L7.8 4.2 Z" fill="#c9c9c9"/></svg>
  <svg class="abs" style="left:271.5px;top:484.5px" width="18" height="20" viewBox="0 0 18 20"><path d="M9 3.4 A6 6 0 0 1 13.6 13.4 M9 15.6 A6 6 0 0 1 4.4 5.6" stroke="#c9c9c9" stroke-width="1.6" fill="none"/><path d="M9.4 .4 L5.8 3.4 L9.4 6.4 Z M8.6 12.6 L12.2 15.6 L8.6 18.6 Z" fill="#c9c9c9"/></svg>
</div>
<div class="pt" id="tpk" style="transform:scaleX(0.903);left:826.6px;top:115px;font-size:9.8px;font-weight:bold;color:#e4e4e4;">Techpacker</div>
<div class="pt" id="folders" style="-webkit-text-stroke:.3px #fff;transform:scaleX(1.074);letter-spacing:.3px;left:832.4px;top:149.6px;font-size:14.4px;color:#fff;">Folders</div>
<div class="pt" id="searchph" style="transform:scaleX(1.006);left:967.5px;top:150.6px;font-size:11.8px;color:#b2b2b2;">Search...</div>
<div class="pt" id="bB" style="transform:scaleX(1.023);left:1079.8px;top:147.4px;font-size:13.2px;color:#fff;-webkit-text-stroke:.3px #fff;">B</div>
<div class="pt" id="bA" style="transform:scaleX(1.250);left:988.8px;top:212.6px;font-size:13.2px;color:#fff;-webkit-text-stroke:.3px #fff;">A</div>
<div class="pt" id="projA" style="-webkit-text-stroke:.22px #121212;transform:scaleX(1.129);letter-spacing:.6px;left:897px;top:192.6px;font-size:15px;color:#121212;">Project A</div>
<div class="pt" id="tpA" style="-webkit-text-stroke:.2px #8f8f8f;transform:scaleX(1.088);letter-spacing:.4px;left:897px;top:215.4px;font-size:11px;color:#8f8f8f;">0 Techpack</div>
<div class="pt" id="projB" style="-webkit-text-stroke:.22px #121212;transform:scaleX(1.111);letter-spacing:.6px;left:897px;top:236.8px;font-size:15px;color:#121212;">Project B</div>
<div class="pt" id="tpB" style="-webkit-text-stroke:.2px #8f8f8f;transform:scaleX(1.080);letter-spacing:.4px;left:897px;top:259.4px;font-size:11px;color:#8f8f8f;">34 Techpacks</div>
<div class="pt" id="navF" style="left:852.7px;top:609px;font-size:9.6px;font-weight:bold;color:#fff;">FOLDER</div>
<div class="pt" id="navL" style="transform:scaleX(1.006);left:959.7px;top:609px;font-size:9.6px;font-weight:bold;color:#c3c7c9;">LIBRARIES</div>
<div class="pt" id="navR" style="transform:scaleX(0.994);left:1079.5px;top:609px;font-size:9.6px;font-weight:bold;color:#c3c7c9;">RECENT</div>

<!--DOCK-->
<div class="abs" style="left:1152.7px;top:79.5px;width:13.7px;height:585px;background:#4c4c4c;"></div>
<div class="abs" style="left:1166.4px;top:54px;width:1.8px;height:613px;background:#3d3d3d;"></div>
<svg class="abs" style="left:1155.5px;top:83.5px" width="9" height="6" viewBox="0 0 9 6"><path d="M1.2 4.4 L4.5 1.6 L7.8 4.4" stroke="#b4b4b4" stroke-width="1.1" fill="none"/></svg>
<svg class="abs" style="left:1155.5px;top:641.5px" width="9" height="6" viewBox="0 0 9 6"><path d="M1.2 1.6 L4.5 4.4 L7.8 1.6" stroke="#b4b4b4" stroke-width="1.1" fill="none"/></svg>
<div class="abs" style="left:1154.2px;top:352px;width:10.6px;height:23px;border-radius:5px;background:#636363;"></div>
<svg class="abs" style="left:1168.2px;top:54px" width="32" height="613" viewBox="1168.2 54 32 613">
<rect x="1168.2" y="54" width="32" height="613" fill="#535353"/>
<rect x="1168.2" y="54" width="32" height="1.5" fill="#3c3c3c"/>
<rect x="1168.2" y="55.5" width="32" height="9.3" fill="#424242"/>
<path d="M1191.6 58 L1189.8 60.2 L1191.6 62.4 M1194.8 58 L1193 60.2 L1194.8 62.4" stroke="#c0c0c0" stroke-width="1" fill="none"/>
<rect x="1168.2" y="98.5" width="32" height="1.4" fill="#3e3e3e"/>
<rect x="1168.2" y="132.4" width="32" height="1.4" fill="#3e3e3e"/>
<rect x="1168.2" y="190" width="32" height="1.4" fill="#3e3e3e"/>
<rect x="1168.2" y="225.2" width="32" height="1.4" fill="#3e3e3e"/>
<rect x="1168.2" y="281.8" width="32" height="1.4" fill="#3e3e3e"/>
<rect x="1168.2" y="316" width="32" height="1.4" fill="#3e3e3e"/>
<rect x="1175.8" y="68.2" width="1.1" height="2.8" fill="#414141"/>
<rect x="1177.9" y="68.2" width="1.1" height="2.8" fill="#414141"/>
<rect x="1180.0" y="68.2" width="1.1" height="2.8" fill="#414141"/>
<rect x="1182.1" y="68.2" width="1.1" height="2.8" fill="#414141"/>
<rect x="1184.2" y="68.2" width="1.1" height="2.8" fill="#414141"/>
<rect x="1186.3" y="68.2" width="1.1" height="2.8" fill="#414141"/>
<rect x="1188.4" y="68.2" width="1.1" height="2.8" fill="#414141"/>
<rect x="1190.5" y="68.2" width="1.1" height="2.8" fill="#414141"/>
<rect x="1175.8" y="102.1" width="1.1" height="2.8" fill="#414141"/>
<rect x="1177.9" y="102.1" width="1.1" height="2.8" fill="#414141"/>
<rect x="1180.0" y="102.1" width="1.1" height="2.8" fill="#414141"/>
<rect x="1182.1" y="102.1" width="1.1" height="2.8" fill="#414141"/>
<rect x="1184.2" y="102.1" width="1.1" height="2.8" fill="#414141"/>
<rect x="1186.3" y="102.1" width="1.1" height="2.8" fill="#414141"/>
<rect x="1188.4" y="102.1" width="1.1" height="2.8" fill="#414141"/>
<rect x="1190.5" y="102.1" width="1.1" height="2.8" fill="#414141"/>
<rect x="1175.8" y="136.3" width="1.1" height="2.8" fill="#414141"/>
<rect x="1177.9" y="136.3" width="1.1" height="2.8" fill="#414141"/>
<rect x="1180.0" y="136.3" width="1.1" height="2.8" fill="#414141"/>
<rect x="1182.1" y="136.3" width="1.1" height="2.8" fill="#414141"/>
<rect x="1184.2" y="136.3" width="1.1" height="2.8" fill="#414141"/>
<rect x="1186.3" y="136.3" width="1.1" height="2.8" fill="#414141"/>
<rect x="1188.4" y="136.3" width="1.1" height="2.8" fill="#414141"/>
<rect x="1190.5" y="136.3" width="1.1" height="2.8" fill="#414141"/>
<rect x="1175.8" y="194.5" width="1.1" height="2.8" fill="#414141"/>
<rect x="1177.9" y="194.5" width="1.1" height="2.8" fill="#414141"/>
<rect x="1180.0" y="194.5" width="1.1" height="2.8" fill="#414141"/>
<rect x="1182.1" y="194.5" width="1.1" height="2.8" fill="#414141"/>
<rect x="1184.2" y="194.5" width="1.1" height="2.8" fill="#414141"/>
<rect x="1186.3" y="194.5" width="1.1" height="2.8" fill="#414141"/>
<rect x="1188.4" y="194.5" width="1.1" height="2.8" fill="#414141"/>
<rect x="1190.5" y="194.5" width="1.1" height="2.8" fill="#414141"/>
<rect x="1175.8" y="229" width="1.1" height="2.8" fill="#414141"/>
<rect x="1177.9" y="229" width="1.1" height="2.8" fill="#414141"/>
<rect x="1180.0" y="229" width="1.1" height="2.8" fill="#414141"/>
<rect x="1182.1" y="229" width="1.1" height="2.8" fill="#414141"/>
<rect x="1184.2" y="229" width="1.1" height="2.8" fill="#414141"/>
<rect x="1186.3" y="229" width="1.1" height="2.8" fill="#414141"/>
<rect x="1188.4" y="229" width="1.1" height="2.8" fill="#414141"/>
<rect x="1190.5" y="229" width="1.1" height="2.8" fill="#414141"/>
<rect x="1175.8" y="286" width="1.1" height="2.8" fill="#414141"/>
<rect x="1177.9" y="286" width="1.1" height="2.8" fill="#414141"/>
<rect x="1180.0" y="286" width="1.1" height="2.8" fill="#414141"/>
<rect x="1182.1" y="286" width="1.1" height="2.8" fill="#414141"/>
<rect x="1184.2" y="286" width="1.1" height="2.8" fill="#414141"/>
<rect x="1186.3" y="286" width="1.1" height="2.8" fill="#414141"/>
<rect x="1188.4" y="286" width="1.1" height="2.8" fill="#414141"/>
<rect x="1190.5" y="286" width="1.1" height="2.8" fill="#414141"/>
<defs><linearGradient id="dg1" x1="0" x2="1"><stop offset="0" stop-color="#111"/><stop offset="1" stop-color="#e8e8e8"/></linearGradient><linearGradient id="dg2" x1="0" y1="0" x2="1" y2="1"><stop offset="0" stop-color="#0c0c0c"/><stop offset=".75" stop-color="#c8c8c8"/></linearGradient></defs>
<rect x="1177.9" y="79.5" width="13.8" height="9.8" rx=".8" fill="url(#dg1)" stroke="#d2d2d2" stroke-width="1.1"/>
<rect x="1180.6" y="113.6" width="10.8" height="10.2" fill="#5a5a5a" stroke="#d2d2d2" stroke-width="1"/>
<rect x="1177.8" y="119" width="4.6" height="4.6" rx="1" fill="#535353" stroke="#d2d2d2" stroke-width=".9"/><rect x="1180" y="121.2" width="4.6" height="4.6" rx="1" fill="#535353" stroke="#d2d2d2" stroke-width=".9"/>
<path d="M1185.4 147.2 C1190 147 1193.6 149.6 1193.4 152.6 C1193.2 155.4 1190.4 155 1189.2 155.8 C1188 156.8 1189 158.4 1186 158.6 C1181 158.8 1177 156.6 1177 153.2 C1177 149.6 1181 147.4 1185.4 147.2 Z" fill="#d2d2d2"/>
<circle cx="1180.4" cy="154.6" r="1.05" fill="#4a4a4a"/>
<circle cx="1183.4" cy="156.2" r="1.05" fill="#4a4a4a"/>
<circle cx="1186.6" cy="155.6" r="1.05" fill="#4a4a4a"/>
<circle cx="1189.6" cy="152.6" r="1.05" fill="#4a4a4a"/>
<circle cx="1188.2" cy="149.8" r="1.05" fill="#4a4a4a"/>
<path d="M1178.4 170 C1186 170.4 1191 176 1191.4 182.6 H1178.4 Z" fill="url(#dg2)" stroke="#d2d2d2" stroke-width="1"/>
<rect x="1177.7" y="205.4" width="14.4" height="1" fill="#d2d2d2"/><rect x="1177.7" y="209" width="14.4" height="1.7" fill="#d2d2d2"/><rect x="1177.7" y="212.9" width="14.4" height="2.9" fill="#d2d2d2"/>
<rect x="1179.2" y="239.6" width="11.2" height="11" fill="none" stroke="#d2d2d2" stroke-width="1" stroke-dasharray="1.4 1.1"/>
<rect x="1178.1000000000001" y="238.5" width="2.2" height="2.2" fill="#d2d2d2"/>
<rect x="1178.1000000000001" y="244.0" width="2.2" height="2.2" fill="#d2d2d2"/>
<rect x="1178.1000000000001" y="249.5" width="2.2" height="2.2" fill="#d2d2d2"/>
<rect x="1183.7" y="238.5" width="2.2" height="2.2" fill="#d2d2d2"/>
<rect x="1184.1" y="244.4" width="1.4" height="1.4" fill="#d2d2d2"/>
<rect x="1183.7" y="249.5" width="2.2" height="2.2" fill="#d2d2d2"/>
<rect x="1189.3000000000002" y="238.5" width="2.2" height="2.2" fill="#d2d2d2"/>
<rect x="1189.3000000000002" y="244.0" width="2.2" height="2.2" fill="#d2d2d2"/>
<rect x="1189.3000000000002" y="249.5" width="2.2" height="2.2" fill="#d2d2d2"/>
<rect x="1178.2" y="262.5" width="7.8" height="7.8" fill="#9a9a9a" stroke="#c4c4c4" stroke-width=".8"/>
<rect x="1183.2" y="266.8" width="8" height="8" fill="#d0d0d0"/>
<rect x="1183.2" y="266.8" width="2.8" height="3.5" fill="#b4b4b4" stroke="#e4e4e4" stroke-width=".6"/>
<rect x="1177.4" y="298" width="13.8" height="9.8" fill="#cfcfcf"/>
<rect x="1178.8" y="299.2" width="2.8" height="3" fill="#8e8e8e"/><rect x="1178.8" y="303.6" width="2.8" height="3" fill="#8e8e8e"/>
<rect x="1183" y="299.2" width="2.8" height="3" fill="#c0c0c0"/><rect x="1183" y="303.6" width="2.8" height="3" fill="#8e8e8e"/>
<rect x="1187.2" y="299.2" width="2.8" height="3" fill="#8e8e8e"/><rect x="1187.2" y="303.6" width="2.8" height="3" fill="#8e8e8e"/>
</svg>
<!--STATUS-->
<div class="abs" style="left:58.7px;top:650.8px;width:1px;height:14px;background:#4f4f4f;"></div>
<div class="abs" id="statusbar" style="left:59.5px;top:650.8px;width:1093.2px;height:14px;background:#4f4f4f;overflow:hidden;">
  <div class="abs" style="left:361px;top:0;width:733px;height:14px;background:#4a4a4a;"></div>
  <div class="abs" style="left:3.8px;top:1.2px;width:41px;height:13px;background:#454545;"></div>
  <div class="abs" style="left:46.3px;top:1.2px;width:13.5px;height:13px;background:#454545;"><svg width="8" height="6" viewBox="0 0 8 6" style="position:absolute;left:2.8px;top:6px"><path d="M0.8 1.2 L4 4.2 L7.2 1.2" stroke="#e6e6e6" stroke-width="1.2" fill="none"/></svg></div>
  <div class="abs" style="left:95.5px;top:1.2px;width:32.5px;height:13px;background:#454545;"></div>
  <div class="abs" style="left:129.7px;top:1.2px;width:13.5px;height:13px;background:#454545;"><svg width="8" height="6" viewBox="0 0 8 6" style="position:absolute;left:2.8px;top:6px"><path d="M0.8 1.2 L4 4.2 L7.2 1.2" stroke="#e6e6e6" stroke-width="1.2" fill="none"/></svg></div>
  <div class="abs" style="left:178.5px;top:1px;width:1px;height:13px;background:#464646;"></div>
  <svg class="abs" style="left:66px;top:5px" width="24" height="8" viewBox="0 0 24 8"><path d="M1.6 .6 V7.4" stroke="#6c6c6c" stroke-width="1.2"/><path d="M7.2 .6 V7.4 L2.6 4 Z M21.6 .6 V7.4 L17.4 4 Z" fill="#6c6c6c"/></svg>
  <svg class="abs" style="left:150px;top:5px" width="24" height="8" viewBox="0 0 24 8"><path d="M1.4 .6 V7.4 L5.6 4 Z M15.2 .6 V7.4 L19.8 4 Z" fill="#6c6c6c"/><path d="M20.8 .6 V7.4" stroke="#6c6c6c" stroke-width="1.2"/></svg>
  <svg class="abs" style="left:351px;top:5.6px" width="6" height="8" viewBox="0 0 6 8"><path d="M.4 .2 V7.4 L5 3.8 Z" fill="#e8e8e8"/></svg>
  <svg class="abs" style="left:365px;top:5.4px" width="6" height="9" viewBox="0 0 6 9"><path d="M4.4 .8 L1.4 4.2 L4.4 7.6" stroke="#bdbdbd" stroke-width="1.1" fill="none"/></svg>
  <svg class="abs" style="left:1083px;top:3.4px" width="6" height="9" viewBox="0 0 6 9"><path d="M1.4 .8 L4.4 4.2 L1.4 7.6" stroke="#bdbdbd" stroke-width="1.1" fill="none"/></svg>
  <div class="abs" style="left:718.8px;top:1.8px;width:21.2px;height:11.6px;border-radius:5.5px;background:#646464;"></div>
</div>
<div class="t" id="zoompct" style="transform:scaleX(0.833);left:66px;top:654.9px;font-size:9.6px;color:#e2e2e2;">50%</div>
<div class="t" id="pageno" style="left:158px;top:654.9px;font-size:9.6px;color:#e2e2e2;">1</div>
<div class="t" id="togsel" style="transform:scaleX(0.947);left:288.3px;top:654.9px;font-size:9.6px;color:#d0d0d0;">Toggle Selection</div>
<div class="abs" style="left:0;top:664.7px;width:1200px;height:2.3px;background:#151515;"></div>

</div>
</body>
</html>
